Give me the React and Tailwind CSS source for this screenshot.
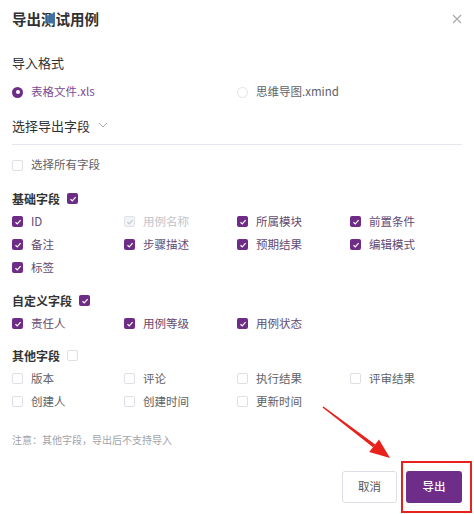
import React from "react";

function Check({ state = "off" }) {
  if (state === "on") {
    return (
      <span className="w-[11px] h-[11px] rounded-[2px] bg-[#6e2c86] flex items-center justify-center shrink-0">
        <svg width="8" height="8" viewBox="0 0 8 8">
          <path d="M1.5 4.2 L3.3 5.9 L6.6 2.2" stroke="white" strokeWidth="1.2" fill="none" />
        </svg>
      </span>
    );
  }
  if (state === "disabled") {
    return (
      <span className="w-[11px] h-[11px] rounded-[2px] bg-[#f3f4f7] border border-[#dfe2e8] flex items-center justify-center shrink-0">
        <svg width="8" height="8" viewBox="0 0 8 8">
          <path d="M1.3 4.1 L3.2 5.9 L6.6 2.1" stroke="#c3c7d0" strokeWidth="1.1" fill="none" />
        </svg>
      </span>
    );
  }
  return <span className="w-[11px] h-[11px] rounded-[2px] bg-white border border-[#dcdfe6] shrink-0" />;
}

function Item({ label, state }) {
  const color =
    state === "on" ? "text-[#624a72]" : state === "disabled" ? "text-[#c0c4cc]" : "text-[#606266]";
  return (
    <div className="h-[23px] flex items-center">
      <Check state={state} />
      <span className={`ml-[8px] text-[11.5px] leading-none ${color}`}>{label}</span>
    </div>
  );
}

function Grid({ items }) {
  return (
    <div className="grid grid-cols-[112px_113px_113px_1fr]">
      {items.map(([l, s]) => (
        <Item key={l} label={l} state={s} />
      ))}
    </div>
  );
}

function Header({ label, state }) {
  return (
    <div className="h-[23px] flex items-center">
      <span className="text-[12px] font-semibold text-[#333] leading-none">{label}</span>
      <span className="ml-[7px] flex">
        <Check state={state} />
      </span>
    </div>
  );
}

export default function App() {
  return (
    <div
      className="relative w-[474px] h-[514px] overflow-hidden bg-white"
      style={{ fontFamily: '"Noto Sans CJK SC", "Noto Sans", sans-serif' }}
    >
      <div className="px-[12px] flex flex-col">
        <div className="h-[38px] flex items-center justify-between">
          <span className="text-[14.5px] font-bold text-[#303133] leading-none">导出测试用例</span>
          <svg width="10" height="10" viewBox="0 0 10 10">
            <path d="M1 1 L9 9 M9 1 L1 9" stroke="#a8abb2" strokeWidth="1.2" />
          </svg>
        </div>

        <div className="mt-[12px] h-[24px] flex items-center">
          <span className="text-[13px] text-[#303133] leading-none">导入格式</span>
        </div>

        <div className="mt-[6px] h-[24px] flex items-center">
          <div className="w-[225px] flex items-center">
            <span className="w-[11px] h-[11px] rounded-full bg-[#6e2c86] flex items-center justify-center">
              <span className="w-[4px] h-[4px] rounded-full bg-white" />
            </span>
            <span className="ml-[8px] text-[11.5px] text-[#7d4a94] leading-none">表格文件.xls</span>
          </div>
          <div className="flex items-center">
            <span className="w-[11px] h-[11px] rounded-full border border-[#e1e3e8] bg-white" />
            <span className="ml-[8px] text-[11.5px] text-[#606266] leading-none">思维导图.xmind</span>
          </div>
        </div>

        <div className="mt-[9px] h-[24px] flex items-center">
          <span className="text-[13px] text-[#303133] leading-none">选择导出字段</span>
          <svg width="10" height="6" viewBox="0 0 10 6" className="ml-[8px]">
            <path d="M1 1 L5 5 L9 1" stroke="#a8abb2" strokeWidth="1" fill="none" />
          </svg>
        </div>

        <div className="mt-[7px] h-px bg-[#e4e7ed]" />

        <div className="mt-[8px] h-[24px] flex items-center">
          <Check state="off" />
          <span className="ml-[8px] text-[11.5px] text-[#606266] leading-none">选择所有字段</span>
        </div>

        <div className="mt-[10px]">
          <Header label="基础字段" state="on" />
          <Grid
            items={[
              ["ID", "on"],
              ["用例名称", "disabled"],
              ["所属模块", "on"],
              ["前置条件", "on"],
              ["备注", "on"],
              ["步骤描述", "on"],
              ["预期结果", "on"],
              ["编辑模式", "on"],
              ["标签", "on"],
            ]}
          />
        </div>

        <div className="mt-[10px]">
          <Header label="自定义字段" state="on" />
          <Grid
            items={[
              ["责任人", "on"],
              ["用例等级", "on"],
              ["用例状态", "on"],
            ]}
          />
        </div>

        <div className="mt-[9px]">
          <Header label="其他字段" state="off" />
          <Grid
            items={[
              ["版本", "off"],
              ["评论", "off"],
              ["执行结果", "off"],
              ["评审结果", "off"],
              ["创建人", "off"],
              ["创建时间", "off"],
              ["更新时间", "off"],
            ]}
          />
        </div>

        <div className="mt-[17px] h-[20px] flex items-center">
          <span className="text-[10px] text-[#a0a3aa] leading-none">注意：其他字段，导出后不支持导入</span>
        </div>

        <div className="mt-[21px] flex justify-end gap-[9px]">
          <button className="w-[55px] h-[32px] rounded-[3px] border border-[#dcdfe6] bg-white text-[11.5px] text-[#555]">
            取消
          </button>
          <button className="w-[56px] h-[32px] rounded-[3px] bg-[#6f2d8a] text-[11.5px] text-white font-medium">
            导出
          </button>
        </div>
      </div>

      {/* annotation overlays */}
      <div className="absolute left-[401px] top-[461px] w-[71px] h-[52px] border-2 border-[#e8211d]" />
      <svg className="absolute left-0 top-0" width="474" height="514" viewBox="0 0 474 514">
        <polygon points="322.5,407.5 323.5,406.5 375.2,444.4 373.0,447.2" fill="#e8211d" />
        <polygon points="390,458 369.2,452.1 379,439.5" fill="#e8211d" />
      </svg>
    </div>
  );
}
